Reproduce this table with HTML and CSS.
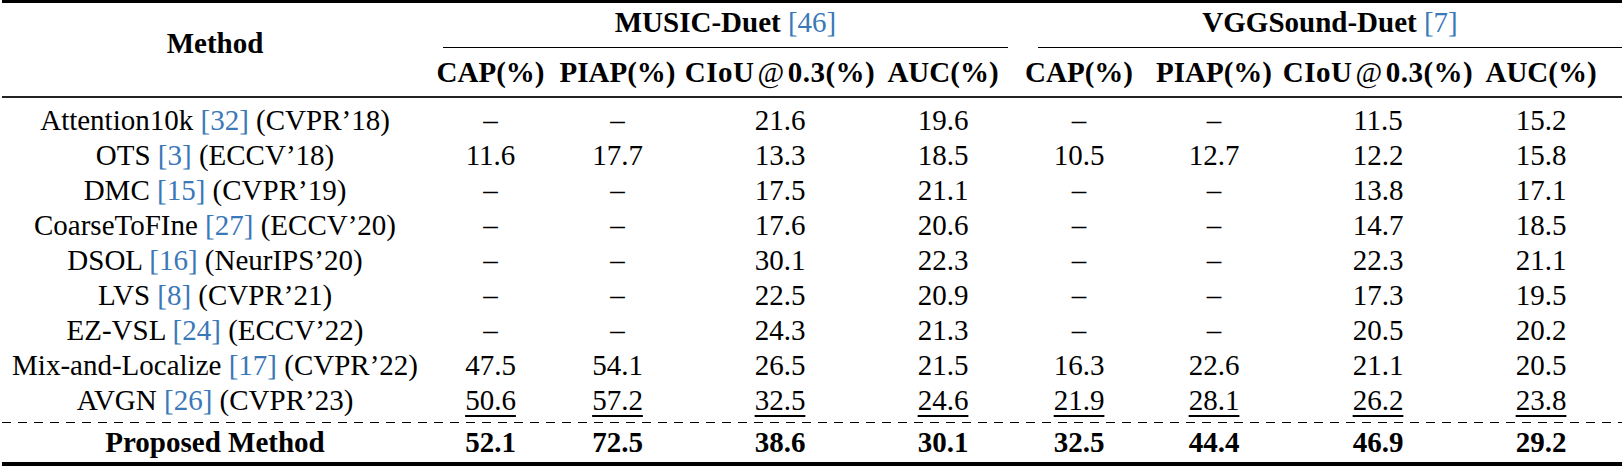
FILE: index.html
```html
<!DOCTYPE html>
<html lang="en">
<head>
    <meta charset="UTF-8">
    <title>Results</title>
    <link rel="stylesheet" href="styles.css">
</head>
<body>
    <table class="results">
        <colgroup>
            <col class="col-method">
            <col class="col-cap">
            <col class="col-piap">
            <col class="col-ciou">
            <col class="col-auc">
            <col class="col-cap2">
            <col class="col-piap2">
            <col class="col-ciou2">
            <col class="col-auc2">
        </colgroup>
        <thead>
            <tr class="group-row">
                <th rowspan="2" class="method-head">Method</th>
                <th colspan="4"><div class="group-title music">MUSIC-Duet <span class="cite">[46]</span></div></th>
                <th colspan="4"><div class="group-title vgg">VGGSound-Duet <span class="cite">[7]</span></div></th>
            </tr>
            <tr class="metric-row">
                <th>CAP(%)</th>
                <th>PIAP(%)</th>
                <th class="ciou">CIoU<span class="at">@</span>0.3(%)</th>
                <th>AUC(%)</th>
                <th>CAP(%)</th>
                <th>PIAP(%)</th>
                <th class="ciou">CIoU<span class="at">@</span>0.3(%)</th>
                <th class="last">AUC(%)</th>
            </tr>
        </thead>
        <tbody class="baselines">
            <tr>
                <td>Attention10k <span class="cite">[32]</span> (CVPR’18)</td>
                <td>–</td><td>–</td><td>21.6</td><td>19.6</td>
                <td>–</td><td>–</td><td>11.5</td><td class="last">15.2</td>
            </tr>
            <tr>
                <td>OTS <span class="cite">[3]</span> (ECCV’18)</td>
                <td>11.6</td><td>17.7</td><td>13.3</td><td>18.5</td>
                <td>10.5</td><td>12.7</td><td>12.2</td><td class="last">15.8</td>
            </tr>
            <tr>
                <td>DMC <span class="cite">[15]</span> (CVPR’19)</td>
                <td>–</td><td>–</td><td>17.5</td><td>21.1</td>
                <td>–</td><td>–</td><td>13.8</td><td class="last">17.1</td>
            </tr>
            <tr>
                <td>CoarseToFIne <span class="cite">[27]</span> (ECCV’20)</td>
                <td>–</td><td>–</td><td>17.6</td><td>20.6</td>
                <td>–</td><td>–</td><td>14.7</td><td class="last">18.5</td>
            </tr>
            <tr>
                <td>DSOL <span class="cite">[16]</span> (NeurIPS’20)</td>
                <td>–</td><td>–</td><td>30.1</td><td>22.3</td>
                <td>–</td><td>–</td><td>22.3</td><td class="last">21.1</td>
            </tr>
            <tr>
                <td>LVS <span class="cite">[8]</span> (CVPR’21)</td>
                <td>–</td><td>–</td><td>22.5</td><td>20.9</td>
                <td>–</td><td>–</td><td>17.3</td><td class="last">19.5</td>
            </tr>
            <tr>
                <td>EZ-VSL <span class="cite">[24]</span> (ECCV’22)</td>
                <td>–</td><td>–</td><td>24.3</td><td>21.3</td>
                <td>–</td><td>–</td><td>20.5</td><td class="last">20.2</td>
            </tr>
            <tr>
                <td>Mix-and-Localize <span class="cite">[17]</span> (CVPR’22)</td>
                <td>47.5</td><td>54.1</td><td>26.5</td><td>21.5</td>
                <td>16.3</td><td>22.6</td><td>21.1</td><td class="last">20.5</td>
            </tr>
            <tr>
                <td>AVGN <span class="cite">[26]</span> (CVPR’23)</td>
                <td><span class="second">50.6</span></td><td><span class="second">57.2</span></td><td><span class="second">32.5</span></td><td><span class="second">24.6</span></td>
                <td><span class="second">21.9</span></td><td><span class="second">28.1</span></td><td><span class="second">26.2</span></td><td class="last"><span class="second">23.8</span></td>
            </tr>
        </tbody>
        <tbody class="ours">
            <tr class="dash-row"><td colspan="9"></td></tr>
            <tr>
                <td>Proposed Method</td>
                <td>52.1</td><td>72.5</td><td>38.6</td><td>30.1</td>
                <td>32.5</td><td>44.4</td><td>46.9</td><td class="last">29.2</td>
            </tr>
        </tbody>
    </table>
</body>
</html>
```

FILE: styles.css
```css
html, body {
    margin: 0;
    padding: 0;
    background: #fff;
}

body {
    font-family: "Liberation Serif", "Times New Roman", serif;
    font-size: 29px;
    color: #000;
}

.results {
    width: 1620px;
    margin-left: 2px;
    table-layout: fixed;
    border-collapse: collapse;
    border-top: 3px solid #000;
    border-bottom: 4px solid #000;
}

.col-method { width: 426px; }
.col-cap    { width: 125px; }
.col-piap   { width: 129px; }
.col-ciou   { width: 196px; }
.col-auc    { width: 130px; }
.col-cap2   { width: 142px; }
.col-piap2  { width: 128px; }
.col-ciou2  { width: 200px; }
.col-auc2   { width: 144px; }

.results th,
.results td {
    padding: 0;
    text-align: center;
    white-space: nowrap;
}

.results .last {
    padding-right: 18px;
}

/* header */
.group-row th {
    height: 45px;
    vertical-align: bottom;
}

.group-title {
    line-height: 38px;
    padding-bottom: 6px;
    border-bottom: 1px solid #000;
}

.group-title.music {
    margin-left: 15px;
}

.group-title.vgg {
    margin-left: 30px;
}

.group-row .method-head {
    vertical-align: middle;
    padding-bottom: 12px;
    border-bottom: 2px solid #222;
}

.metric-row th {
    height: 48px;
    line-height: 48px;
    border-bottom: 2px solid #222;
}

.ciou {
    letter-spacing: 0.5px;
}

.at {
    font-weight: normal;
    margin: 0 3px;
}

.cite {
    color: #3b78b8;
    font-weight: normal;
}

/* body rows */
.baselines td {
    line-height: 35px;
}

.baselines tr:first-child td {
    padding-top: 5px;
}

.baselines tr:last-child td {
    padding-bottom: 3px;
}

.second {
    text-decoration: underline;
    text-decoration-thickness: 1.5px;
    text-underline-offset: 5px;
}

.dash-row td {
    height: 2px;
    padding: 0;
    line-height: 0;
    font-size: 0;
    background-image: linear-gradient(to right, #000 0, #000 9px, transparent 9px);
    background-size: 16px 1px;
    background-repeat: repeat-x;
    background-position: 0 center;
}

.ours tr:last-child td {
    line-height: 39px;
    font-weight: bold;
}
```
